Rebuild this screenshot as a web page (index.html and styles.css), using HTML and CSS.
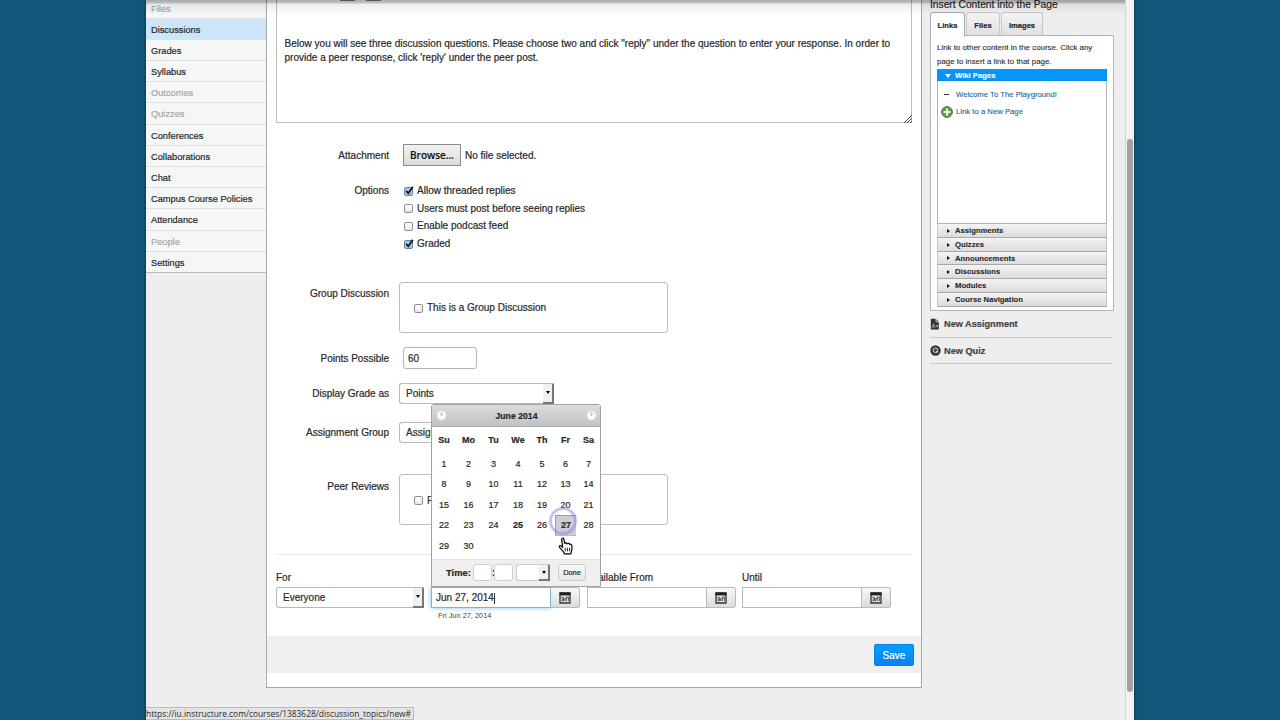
FILE: index.html
```html
<!DOCTYPE html>
<html lang="en">
<head>
	<meta charset="utf-8">
	<meta name="viewport" content="width=device-width, initial-scale=1.0">
	<title>New Discussion</title>
	<link rel="stylesheet" href="styles.css">
</head>
<body>
<svg width="0" height="0" class="defs">
	<symbol id="cal" viewBox="0 0 12 12">
		<path d="M1 1h10v10H1z" fill="#e4e4e4" stroke="#333" stroke-width="1.3"/>
		<path d="M.5.5h11V3.4H.5z" fill="#222"/>
		<path d="M2.4 5.4h2v3.4h-2M4.4 7.2H2.6M5.6 9V6.6h1.8V5H9.4V9M7.4 6.6v2.6" fill="none" stroke="#444" stroke-width=".9"/>
	</symbol>
	<symbol id="check" viewBox="0 0 10 10">
		<path d="M2.2 4.8 4.3 7.3 8.8 .8" fill="none" stroke="#10182c" stroke-width="1.8"/>
	</symbol>
</svg>
<div class="window">
	<nav class="sections">
		<ul>
			<li class="off">Files</li>
			<li class="active">Discussions</li>
			<li>Grades</li>
			<li>Syllabus</li>
			<li class="off">Outcomes</li>
			<li class="off">Quizzes</li>
			<li>Conferences</li>
			<li>Collaborations</li>
			<li>Chat</li>
			<li>Campus Course Policies</li>
			<li>Attendance</li>
			<li class="off">People</li>
			<li>Settings</li>
		</ul>
	</nav>

	<main class="content">
		<div class="editor">
			<p>Below you will see three discussion questions. Please choose two and click "reply" under the question to enter your response. In order to<br>
			provide a peer response, click 'reply' under the peer post.</p>
			<svg class="grip" width="8" height="8" viewBox="0 0 8 8"><path d="M0 8 8 0M3 8 8 3M6 8 8 6" stroke="#444" stroke-width="1"/></svg>
		</div>

		<div class="row attach">
			<label>Attachment</label>
			<div class="file"><span class="browse">Browse…</span><span>No file selected.</span></div>
		</div>
		<div class="row options">
			<label>Options</label>
			<ul>
				<li><span class="box on"><svg width="10" height="10"><use href="#check"/></svg></span>Allow threaded replies</li>
				<li><span class="box"></span>Users must post before seeing replies</li>
				<li><span class="box"></span>Enable podcast feed</li>
				<li><span class="box on"><svg width="10" height="10"><use href="#check"/></svg></span>Graded</li>
			</ul>
		</div>
		<div class="row group">
			<label>Group Discussion</label>
			<div class="panel"><span class="box"></span>This is a Group Discussion</div>
		</div>
		<div class="row points">
			<label>Points Possible</label>
			<div class="input">60</div>
		</div>
		<div class="row display">
			<label>Display Grade as</label>
			<div class="select">Points<i></i></div>
		</div>
		<div class="row assign">
			<label>Assignment Group</label>
			<div class="select">Assig<i></i></div>
		</div>
		<div class="row peer">
			<label>Peer Reviews</label>
			<div class="panel"><span class="box"></span>R</div>
		</div>

		<hr>

		<div class="dates">
			<div class="field who">
				<label>For</label>
				<div class="select">Everyone<i></i></div>
			</div>
			<div class="field due">
				<label></label>
				<div class="date focus"><span class="value">Jun 27, 2014<b class="caret"></b></span><span class="btn"><svg width="12" height="12"><use href="#cal"/></svg></span></div>
				<small>Fri Jun 27, 2014</small>
				<div class="picker">
					<div class="month"><span class="arrow">‹</span><span>June 2014</span><span class="arrow">›</span></div>
					<div class="days head"><b>Su</b><b>Mo</b><b>Tu</b><b>We</b><b>Th</b><b>Fr</b><b>Sa</b></div>
					<div class="days">
						<span>1</span><span>2</span><span>3</span><span>4</span><span>5</span><span>6</span><span>7</span>
						<span>8</span><span>9</span><span>10</span><span>11</span><span>12</span><span>13</span><span>14</span>
						<span>15</span><span>16</span><span>17</span><span>18</span><span>19</span><span>20</span><span>21</span>
						<span>22</span><span>23</span><span>24</span><span class="today">25</span><span>26</span><span class="picked">27</span><span>28</span>
						<span>29</span><span>30</span>
					</div>
					<div class="time">
						<span class="label">Time:</span>
						<span class="num"></span><b>:</b><span class="num"></span>
						<span class="select ampm"><i></i></span>
						<span class="done">Done</span>
					</div>
					<span class="ring"></span>
					<svg class="hand" width="16" height="18" viewBox="0 0 16 18">
						<path d="M4.7 10.4 3.7 2.6C3.5 1 5.4.7 5.8 2.2L6.8 6.5C7.4 5.5 8.9 5.7 9.2 6.8 10 6 11.3 6.3 11.6 7.4 12.7 6.9 13.8 7.5 13.9 8.8L14 11.5C14 13.4 13 14.3 12.9 16.8H6.4C5.9 14.6 3.6 12.6 1.6 10.3.7 9 2.3 8.1 3.4 9.1z" fill="#fff" stroke="#000" stroke-width="1.2" stroke-linejoin="round"/>
						<path d="M7.2 10.8v3.5M9.4 10.8v3.5M11.6 10.8v3.5" stroke="#000" stroke-width=".9"/>
					</svg>
				</div>
			</div>
			<div class="field from">
				<label>Available From</label>
				<div class="date"><span class="value"></span><span class="btn"><svg width="12" height="12"><use href="#cal"/></svg></span></div>
			</div>
			<div class="field until">
				<label>Until</label>
				<div class="date"><span class="value"></span><span class="btn"><svg width="12" height="12"><use href="#cal"/></svg></span></div>
			</div>
		</div>

		<div class="actions"><span class="save">Save</span></div>
	</main>

	<aside class="insert">
		<h2>Insert Content into the Page</h2>
		<div class="tabs"><span class="current">Links</span><span>Files</span><span>Images</span></div>
		<div class="tabbody">
			<p>Link to other content in the course. Click any<br>page to insert a link to that page.</p>
			<div class="bar open"><i></i>Wiki Pages</div>
			<div class="pages">
				<a class="page"><i class="dash"></i>Welcome To The Playground!</a>
				<a class="page"><svg width="12" height="12" viewBox="0 0 12 12"><circle cx="6" cy="6" r="5.4" fill="#5da145" stroke="#47783a"/><path d="M6 2.6v6.8M2.6 6h6.8" stroke="#fff" stroke-width="2"/></svg>Link to a New Page</a>
			</div>
			<div class="bar"><i></i>Assignments</div>
			<div class="bar"><i></i>Quizzes</div>
			<div class="bar"><i></i>Announcements</div>
			<div class="bar"><i></i>Discussions</div>
			<div class="bar"><i></i>Modules</div>
			<div class="bar"><i></i>Course Navigation</div>
		</div>
		<div class="create">
			<svg width="10" height="12" viewBox="0 0 10 12"><path d="M.8.7h5l3 3v7.8h-8z" fill="#333"/><path d="M6 .8v3h3" fill="none" stroke="#eee" stroke-width=".8"/><path d="m2 9.8 1.6-4 1.5 4M2.6 8.5h2M6 8h2.4M7.2 6.8v2.4" fill="none" stroke="#ccc" stroke-width=".7"/></svg>
			New Assignment
		</div>
		<div class="create">
			<svg width="11" height="11" viewBox="0 0 11 11"><circle cx="5.5" cy="5.5" r="5.2" fill="#383838"/><circle cx="5.5" cy="5.3" r="2.3" fill="none" stroke="#ddd"/><path d="m5.8 5.6 1.8 2" stroke="#ddd"/></svg>
			New Quiz
		</div>
	</aside>

	<div class="scroll"><span></span></div>
	<div class="topshade"><i></i><i></i></div>
	<div class="status">https://iu.instructure.com/courses/1383628/discussion_topics/new#</div>
</div>
</body>
</html>
```
FILE: styles.css
```css
* {
	box-sizing: border-box;
}
body {
	margin: 0;
	height: 720px;
	overflow: hidden;
	background: #12577a;
	font-family: "Liberation Sans", Arial, sans-serif;
	font-size: 10.03px;
	line-height: 14px;
	color: #282828;
	-webkit-text-stroke: .2px;
}
ul, p, h2 {
	margin: 0;
	padding: 0;
	list-style: none;
}
.defs {
	position: absolute;
}
.window {
	position: relative;
	display: flex;
	width: 988px;
	height: 720px;
	margin-left: 146px;
	background: #eeeeee;
	box-shadow: 0 0 4px #082c40;
}

/* course navigation */
.sections {
	width: 120px;
	font-size: 9.25px;
}
.sections ul {
	margin-top: -2.5px;
	background: #f5f7f7;
}
.sections li {
	height: 21.2px;
	padding: 1px 0 0 5px;
	line-height: 21px;
	white-space: nowrap;
	border-bottom: 1px solid #dfe1e2;
}
.sections li:last-child {
	border-color: #bbb;
}
.sections .off {
	color: #a5a7a9;
}
.sections .active {
	background: #cce5f8;
}

/* form */
.content {
	width: 656px;
	height: 688px;
	background: #fff;
	border: 1px solid #a8a8a8;
	border-top: 0;
}
.editor {
	position: relative;
	width: 636px;
	height: 123px;
	margin-left: 9px;
	padding: 37px 0 0 7.5px;
	border: 1px solid #bdbdbd;
	border-top: 0;
	line-height: 14.2px;
	white-space: nowrap;
}
.grip {
	position: absolute;
	right: -1px;
	bottom: -1px;
}
.row {
	display: flex;
}
.row > label {
	width: 122px;
	text-align: right;
	white-space: nowrap;
}
.attach {
	margin-top: 21px;
	height: 22px;
	line-height: 23px;
}
.file {
	display: flex;
	gap: 4px;
	margin-left: 14px;
}
.browse {
	width: 58px;
	height: 22px;
	line-height: 21px;
	text-align: center;
	font-family: "Open Sans", sans-serif;
	font-weight: 600;
	font-size: 10px;
	color: #111;
	background: linear-gradient(#f2f2f2, #dcdcdc);
	border: 1px solid #8c8c8c;
	-webkit-text-stroke: .1px;
}
.options {
	margin-top: 16.4px;
	line-height: 18.5px;
}
.options ul {
	margin-left: 15px;
}
.options li {
	display: flex;
	align-items: center;
	height: 17.7px;
}
.box {
	flex: none;
	width: 9px;
	height: 9px;
	margin-right: 4px;
	border: 1px solid #8f8f8f;
	border-radius: 2px;
	background: linear-gradient(#fff, #e6e6e6);
}
.box.on {
	border-color: #6482a8;
	background: #a9c9ec;
}
.box svg {
	display: block;
	margin: -2px 0 0 -1px;
}
.group {
	margin-top: 28.6px;
}
.group label, .peer label {
	padding-top: 5px;
}
.panel {
	display: flex;
	align-items: center;
	width: 269px;
	height: 51px;
	margin-left: 10px;
	padding: 2px 0 0 14px;
	border: 1px solid #bdbdbd;
	border-radius: 3px;
}
.points {
	margin-top: 14px;
	line-height: 23px;
}
.input {
	width: 74px;
	height: 22px;
	margin-left: 14px;
	padding-left: 4px;
	line-height: 21px;
	border: 1px solid #b5b5b5;
	border-radius: 3px;
}
.display {
	margin-top: 13px;
	line-height: 22px;
}
.assign {
	margin-top: 17px;
	line-height: 22px;
}
.select {
	display: flex;
	justify-content: space-between;
	width: 155px;
	height: 21px;
	padding-left: 6px;
	line-height: 20px;
	background: #fff;
	border: 1px solid #b8b8b8;
	border-right: 0;
	border-radius: 3px 0 0 3px;
}
.row .select {
	margin-left: 10px;
}
.select i {
	display: grid;
	place-items: center;
	width: 11px;
	height: 20px;
	background: #f0f0f0;
	border-right: 2px solid #777;
	border-bottom: 2px solid #777;
}
.select i::after {
	content: "";
	border: 2.5px solid transparent;
	border-top: 3px solid #000;
	border-bottom: 0;
}
.peer {
	margin-top: 30px;
}
.peer label {
	padding-top: 6px;
}
.peer .panel {
	padding-top: 3px;
}
hr {
	width: 636px;
	margin: 29px 0 0 9px;
	border: 0;
	border-top: 1px solid #eaeaea;
}
.dates {
	display: flex;
	height: 81px;
	padding: 15px 0 0 9px;
}
.field {
	position: relative;
	width: 155.5px;
}
.field > label {
	display: block;
	height: 17px;
	line-height: 15px;
}
.who .select {
	width: 148px;
}
.who {
	width: 155px;
}
.due {
	z-index: 1;
}
.date {
	display: flex;
	width: 149px;
	height: 21px;
}
.value {
	display: flex;
	align-items: center;
	width: 120px;
	padding: 2px 0 0 4px;
	background: #fff;
	border: 1px solid #b9b9b9;
}
.focus .value {
	border-color: #7cb4e0;
	box-shadow: 0 0 5px #8cc3ec;
}
.caret {
	width: 1px;
	height: 11px;
	background: #333;
}
.btn {
	display: grid;
	place-items: center;
	flex: 1;
	padding-top: 1px;
	background: linear-gradient(#f8f8f8, #dcdcdc);
	border: 1px solid #b9b9b9;
	border-left: 0;
	border-radius: 0 3px 3px 0;
}
.field small {
	display: block;
	padding-left: 7px;
	font-size: 7.4px;
	line-height: 16px;
	color: #444;
	-webkit-text-stroke: 0;
}

/* date picker */
.picker {
	position: absolute;
	left: 0;
	bottom: 49px;
	width: 170px;
	height: 183px;
	background: #fff;
	border: 1px solid #a2a2a2;
	border-radius: 3px 3px 0 0;
}
.month {
	display: flex;
	align-items: center;
	justify-content: space-between;
	height: 22px;
	padding: 1px 4px 0 5px;
	font-weight: bold;
	font-size: 8.7px;
	background: linear-gradient(#dadcde, #c0c3c5);
	border-bottom: 1px solid #a9abad;
}
.arrow {
	width: 9px;
	height: 9px;
	border-radius: 50%;
	background: #fafafa;
	color: #b5b7b9;
	line-height: 7px;
	text-align: center;
}
.days {
	display: grid;
	grid-template-columns: 24px 25px 25px 24px 24px 23px 23px;
	grid-auto-rows: 20.5px;
	font-size: 9px;
	line-height: 20.5px;
	text-align: center;
}
.days.head {
	height: 26.8px;
	padding-top: 3.4px;
}
.days .today {
	font-weight: bold;
}
.days .picked {
	font-weight: bold;
	background: #ccccd6;
	border: 1px solid #9a9aa8;
	border-right: 0;
	border-bottom-color: #b5b5c8;
	line-height: 19px;
	margin: 0 1px;
}
.time {
	display: flex;
	align-items: center;
	height: 27px;
	margin-top: 2.7px;
	padding-left: 14px;
	background: #efefef;
	border-top: 1px solid #e2e2e2;
}
.time .label {
	width: 27px;
	font-weight: bold;
	font-size: 9.4px;
}
.num {
	width: 19px;
	height: 17px;
	background: #fff;
	border: 1px solid #cfcfcf;
	border-radius: 3px;
}
.time b {
	width: 2px;
}
.time .ampm {
	width: 34px;
	height: 17px;
	margin-left: 3px;
	justify-content: flex-end;
	border-color: #ccc;
}
.ampm i {
	height: 16px;
}
.done {
	width: 28px;
	height: 17px;
	margin-left: 8px;
	line-height: 16px;
	font-size: 7.4px;
	text-align: center;
	background: linear-gradient(#fafafa, #e4e4e4);
	border: 1px solid #ccc;
	border-radius: 2px;
}
/* click highlight under the pointer */
.ring {
	position: absolute;
	left: 117px;
	top: 102px;
	width: 28px;
	height: 28px;
	border: 3px solid rgba(130, 120, 215, .45);
	border-radius: 50%;
}
.hand {
	position: absolute;
	left: 126px;
	top: 132px;
}
.actions {
	display: flex;
	justify-content: flex-end;
	height: 37px;
	padding: 8px 7px 0 0;
	background: #efefef;
}
.save {
	width: 40px;
	height: 22px;
	line-height: 21px;
	text-align: center;
	color: #fff;
	background: linear-gradient(#00a0ff, #0a80f5);
	border: 1px solid #0a80e0;
	border-radius: 2px;
}

/* insert content */
.insert {
	width: 203px;
	padding: 0 0 0 8px;
}
.insert h2 {
	height: 15px;
	margin-top: -3px;
	font-size: 10.25px;
	font-weight: normal;
	line-height: 15px;
}
.tabs {
	display: flex;
	gap: 1px;
	height: 23px;
	font-size: 7.6px;
	font-weight: bold;
	line-height: 25px;
	text-align: center;
}
.tabs span {
	width: 34px;
	background: linear-gradient(#f4f4f4, #e0e0e0);
	border: 1px solid #c8c8c8;
	border-bottom: 0;
	border-radius: 3px 3px 0 0;
}
.tabs span:last-child {
	width: 42px;
}
.tabs .current {
	position: relative;
	width: 35px;
	height: 25px;
	background: #fff;
	border-color: #aaa;
}
.tabbody {
	width: 184px;
	height: 276px;
	padding: 5px 6px 0;
	background: #fff;
	border: 1px solid #b4b4b4;
	font-size: 7.9px;
	-webkit-text-stroke: .1px;
}
.tabbody p {
	height: 28px;
	white-space: nowrap;
}
.bar {
	display: flex;
	align-items: center;
	gap: 4px;
	height: 13.8px;
	padding: 1px 0 0 9px;
	font-size: 7.7px;
	font-weight: bold;
	background: linear-gradient(#f4f4f4, #dcdcdc);
	border: 1px solid #c6c6c6;
	border-top: 0;
	border-bottom-color: #a8a8a8;
}
.bar i {
	width: 4px;
	border: 2.5px solid transparent;
	border-left: 3.5px solid #111;
	border-right: 0;
}
.bar.open {
	height: 12px;
	padding: 2px 0 0 7px;
	color: #fff;
	background: #0596fd;
	border-color: #0a8ae8;
}
.bar.open i {
	width: 6px;
	border: 3px solid transparent;
	border-top: 4px solid #fff;
	border-bottom: 0;
}
.pages {
	height: 143px;
	padding: 5px 0 0 3px;
	border: 1px solid #b4b4b4;
	border-top: 0;
}
.page {
	display: flex;
	align-items: center;
	gap: 3px;
	height: 17px;
	font-size: 7.72px;
	color: #1d5f9c;
	white-space: nowrap;
}
.dash {
	width: 5px;
	height: 1px;
	margin: 0 4px 0 3px;
	background: #333;
}
.create {
	display: flex;
	align-items: center;
	gap: 4px;
	width: 183px;
	height: 26.5px;
	padding-top: 1px;
	font-weight: bold;
	font-size: 9.2px;
	color: #444;
	border-bottom: 1px solid #c8c8c8;
}
.create + .create {
	gap: 3px;
}

/* browser chrome */
.scroll {
	width: 9px;
	padding-top: 139px;
	background: #f4f2f0;
	border-left: 1px solid #c9d8e2;
}
.scroll span {
	display: block;
	width: 6px;
	height: 553px;
	margin-left: 1px;
	border-radius: 3px;
	background: #a3a09d;
}
.topshade {
	position: absolute;
	top: 0;
	left: 0;
	display: flex;
	gap: 11px;
	width: 979px;
	height: 15px;
	padding-left: 194px;
	background: linear-gradient(rgba(0,0,0,.32), rgba(0,0,0,.24) 3px, rgba(0,0,0,.07) 4px, rgba(0,0,0,0));
}
.topshade i {
	width: 15px;
	height: 1px;
	background: #555;
}
.status {
	position: absolute;
	left: 0;
	bottom: 0;
	width: 268px;
	height: 13px;
	font-family: "Open Sans", sans-serif;
	font-size: 8.37px;
	line-height: 11px;
	white-space: nowrap;
	background: #e4e4e4;
	border: 1px solid #bbb;
	border-left: 0;
	-webkit-text-stroke: 0;
}
```
